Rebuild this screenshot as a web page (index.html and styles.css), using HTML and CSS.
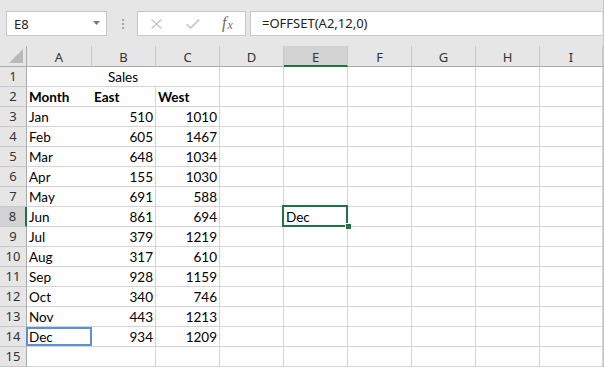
FILE: index.html
```html
<!DOCTYPE html>
<html>
<head>
<meta charset="utf-8">
<link rel="stylesheet" href="styles.css">
</head>
<body>
<div class="app">
  <div class="toolbar">
    <div class="namebox"><span>E8</span><svg class="arrow" width="7" height="4" viewBox="0 0 7 4"><path d="M0 0H7L3.5 4Z" fill="#7a7a7a"/></svg></div>
    <div class="dots"><i></i><i></i><i></i></div>
    <div class="buttons">
      <svg class="ico-x" width="11" height="10" viewBox="0 0 11 10"><path d="M0.5 0.5L10.5 9.5M10.5 0.5L0.5 9.5" stroke="#c3c3c3" stroke-width="1.3" fill="none"/></svg>
      <svg class="ico-check" width="14" height="10" viewBox="0 0 14 10"><path d="M0.8 5.2L4.6 9L13.2 0.6" stroke="#c3c3c3" stroke-width="1.6" fill="none"/></svg>
      <span class="fx">f<sub>x</sub></span>
    </div>
    <div class="formula">=OFFSET(A2,12,0)</div>
  </div>
  <div class="sheet">
    <div class="hd corner"><svg width="14" height="14" viewBox="0 0 14 14"><path d="M14 0V14H0Z" fill="#b9b9b9"/></svg></div>
    <div class="hd col">A</div><div class="hd col">B</div><div class="hd col">C</div><div class="hd col">D</div><div class="hd col sel-col">E</div><div class="hd col">F</div><div class="hd col">G</div><div class="hd col">H</div><div class="hd col">I</div>

    <div class="hd row">1</div><div class="c span3 center">Sales</div><div class="c"></div><div class="c"></div><div class="c"></div><div class="c"></div><div class="c"></div><div class="c"></div>
    <div class="hd row">2</div><div class="c b">Month</div><div class="c b">East</div><div class="c b">West</div><div class="c"></div><div class="c"></div><div class="c"></div><div class="c"></div><div class="c"></div><div class="c"></div>
    <div class="hd row">3</div><div class="c">Jan</div><div class="c n">510</div><div class="c n">1010</div><div class="c"></div><div class="c"></div><div class="c"></div><div class="c"></div><div class="c"></div><div class="c"></div>
    <div class="hd row">4</div><div class="c">Feb</div><div class="c n">605</div><div class="c n">1467</div><div class="c"></div><div class="c"></div><div class="c"></div><div class="c"></div><div class="c"></div><div class="c"></div>
    <div class="hd row">5</div><div class="c">Mar</div><div class="c n">648</div><div class="c n">1034</div><div class="c"></div><div class="c"></div><div class="c"></div><div class="c"></div><div class="c"></div><div class="c"></div>
    <div class="hd row">6</div><div class="c">Apr</div><div class="c n">155</div><div class="c n">1030</div><div class="c"></div><div class="c"></div><div class="c"></div><div class="c"></div><div class="c"></div><div class="c"></div>
    <div class="hd row">7</div><div class="c">May</div><div class="c n">691</div><div class="c n">588</div><div class="c"></div><div class="c"></div><div class="c"></div><div class="c"></div><div class="c"></div><div class="c"></div>
    <div class="hd row sel-row">8</div><div class="c">Jun</div><div class="c n">861</div><div class="c n">694</div><div class="c"></div><div class="c active">Dec<span class="handle"></span></div><div class="c"></div><div class="c"></div><div class="c"></div><div class="c"></div>
    <div class="hd row">9</div><div class="c">Jul</div><div class="c n">379</div><div class="c n">1219</div><div class="c"></div><div class="c"></div><div class="c"></div><div class="c"></div><div class="c"></div><div class="c"></div>
    <div class="hd row">10</div><div class="c">Aug</div><div class="c n">317</div><div class="c n">610</div><div class="c"></div><div class="c"></div><div class="c"></div><div class="c"></div><div class="c"></div><div class="c"></div>
    <div class="hd row">11</div><div class="c">Sep</div><div class="c n">928</div><div class="c n">1159</div><div class="c"></div><div class="c"></div><div class="c"></div><div class="c"></div><div class="c"></div><div class="c"></div>
    <div class="hd row">12</div><div class="c">Oct</div><div class="c n">340</div><div class="c n">746</div><div class="c"></div><div class="c"></div><div class="c"></div><div class="c"></div><div class="c"></div><div class="c"></div>
    <div class="hd row">13</div><div class="c">Nov</div><div class="c n">443</div><div class="c n">1213</div><div class="c"></div><div class="c"></div><div class="c"></div><div class="c"></div><div class="c"></div><div class="c"></div>
    <div class="hd row">14</div><div class="c ref">Dec</div><div class="c n">934</div><div class="c n">1209</div><div class="c"></div><div class="c"></div><div class="c"></div><div class="c"></div><div class="c"></div><div class="c"></div>
    <div class="hd row">15</div><div class="c"></div><div class="c"></div><div class="c"></div><div class="c"></div><div class="c"></div><div class="c"></div><div class="c"></div><div class="c"></div><div class="c"></div>
  </div>
</div>
</body>
</html>
```
FILE: styles.css
```css
* { box-sizing: border-box; }
html, body { margin: 0; padding: 0; }
body { width: 604px; height: 367px; overflow: hidden; background: #e6e6e6; }
.app { width: 604px; height: 367px; border-right: 1px solid #c6c6c6; background: #e6e6e6; }

.toolbar {
  height: 46px;
  display: flex;
  align-items: flex-start;
  padding-top: 11px;
  font-family: "Noto Sans", sans-serif;
  font-size: 13px;
  color: #222;
}
.namebox {
  margin-left: 6px;
  width: 101px;
  height: 25px;
  background: #fff;
  border: 1px solid #c6c6c6;
  display: flex;
  align-items: center;
  justify-content: space-between;
  padding: 0 6px 0 7px;
}
.namebox .arrow { margin-top: -2px; }
.dots {
  margin-left: 15px;
  width: 2px;
  height: 25px;
  display: flex;
  flex-direction: column;
  justify-content: center;
  gap: 2px;
}
.dots i { display: block; width: 2px; height: 2px; background: #a6a6a6; }
.buttons {
  margin-left: 13px;
  width: 109px;
  height: 25px;
  background: #fff;
  border: 1px solid #c6c6c6;
  display: flex;
  align-items: center;
  padding-left: 13px;
}
.ico-check { margin-left: 24px; }
.fx {
  margin-left: 22px;
  font-family: "Liberation Serif", serif;
  font-style: italic;
  font-size: 16px;
  color: #6a6a6a;
  margin-top: -1px;
}
.fx sub { font-size: 12px; vertical-align: -1px; margin-left: 1px; }
.formula {
  margin-left: 4px;
  margin-right: 1px;
  flex: 1;
  height: 25px;
  background: #fff;
  border: 1px solid #c6c6c6;
  border-right: none;
  padding-left: 11px;
  line-height: 23px;
}

.sheet {
  display: grid;
  grid-template-columns: 27px 65px repeat(7, 64px) 63px;
  grid-template-rows: 21px repeat(15, 20px);
  background: #fff;
}
.hd {
  background: #e6e6e6;
  font-family: "Noto Sans", sans-serif;
  font-size: 13px;
  color: #333;
  text-align: center;
  line-height: 20px;
}
.corner {
  border-right: 1px solid #ababab;
  border-bottom: 1px solid #ababab;
  display: flex;
  align-items: flex-end;
  justify-content: flex-end;
  padding: 0 3px 3px 0;
}
.corner svg { display: block; }
.col {
  border-right: 1px solid #c8c8c8;
  border-bottom: 1px solid #ababab;
  padding-top: 1px;
}
.col:last-child { border-right: none; }
.sel-col {
  background: #d2d2d2;
  border-bottom: 2px solid #217346;
}
.row {
  border-right: 1px solid #ababab;
  border-bottom: 1px solid #c8c8c8;
  line-height: 19px;
}
.sel-row {
  background: #d2d2d2;
  border-right: 2px solid #217346;
}
.c {
  position: relative;
  border-right: 1px solid #d4d4d4;
  border-bottom: 1px solid #d4d4d4;
  font-family: "Lato", sans-serif;
  font-size: 13.5px;
  color: #000;
  line-height: 20px;
  padding: 0 2px 0 2px;
  white-space: nowrap;
}
.c:nth-child(10n) { border-right: none; }
.span3 { grid-column: span 3; }
.center { text-align: center; }
.b { font-weight: bold; }
.n { text-align: right; }
.active::after {
  content: "";
  position: absolute;
  top: -2px; left: -2px; right: -1px; bottom: -1px;
  border: 2px solid #217346;
  pointer-events: none;
}
.handle {
  position: absolute;
  left: 61px;
  top: 16px;
  width: 6px;
  height: 6px;
  background: #217346;
  border-left: 1px solid #fff;
  border-top: 1px solid #fff;
  z-index: 2;
}
.ref::after {
  content: "";
  position: absolute;
  top: 0; left: -1px; right: 0; bottom: 0;
  border: 2px solid #5b91d2;
}
```
